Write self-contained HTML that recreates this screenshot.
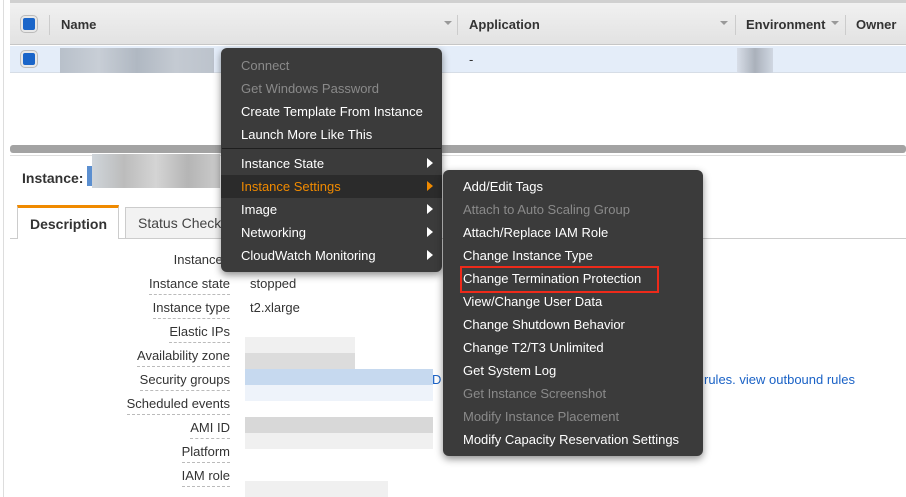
<!DOCTYPE html>
<html><head><style>
*{margin:0;padding:0;box-sizing:border-box}
body{width:906px;height:497px;overflow:hidden;background:#fff;font-family:"Liberation Sans",Arial,sans-serif;font-size:13px;color:#333;position:relative}
.a{position:absolute}
.cb{position:absolute;width:16px;height:16px;border-radius:4px;background:#1a65c9;border:2px solid #e8e8e8;box-shadow:0 0 0 1px #bbb}
.hdr{font-weight:bold;font-size:13px;color:#333}
.menu{position:absolute;background:#3b3b3b;border-radius:6px;box-shadow:0 3px 8px rgba(0,0,0,.45);color:#fff}
.mi{position:absolute;left:20px;font-size:13px;white-space:nowrap}
.dis{color:#8a8a8a}
.arr{position:absolute;left:206px;width:0;height:0;border-top:5px solid transparent;border-bottom:5px solid transparent;border-left:6px solid #fff}
.lab{position:absolute;right:676px;text-align:right;white-space:nowrap;color:#333;border-bottom:1px dashed #bbb;padding-bottom:3px}
.val{position:absolute;left:250px}
.blur{position:absolute}
</style></head><body>
<div class="a" style="left:3px;top:0;width:1px;height:497px;background:#ddd"></div>
<div class="a" style="left:10px;top:0;width:896px;height:3px;background:#d0d0d0"></div>
<div class="a" style="left:10px;top:3px;width:896px;height:42px;background:linear-gradient(#f1f1f1,#e2e2e2);border-bottom:1px solid #c6c6c6"></div>
<div class="cb" style="left:21px;top:16px"></div>
<div class="a" style="left:49px;top:15px;width:1px;height:20px;background:#ccc"></div>
<div class="a hdr" style="left:61px;top:17px">Name</div>
<div class="a" style="left:444px;top:21px;border-left:4px solid transparent;border-right:4px solid transparent;border-top:4px solid #999"></div>
<div class="a" style="left:457px;top:15px;width:1px;height:20px;background:#ccc"></div>
<div class="a hdr" style="left:469px;top:17px">Application</div>
<div class="a" style="left:720px;top:21px;border-left:4px solid transparent;border-right:4px solid transparent;border-top:4px solid #999"></div>
<div class="a" style="left:735px;top:15px;width:1px;height:20px;background:#ccc"></div>
<div class="a hdr" style="left:746px;top:17px">Environment</div>
<div class="a" style="left:831px;top:21px;border-left:4px solid transparent;border-right:4px solid transparent;border-top:4px solid #999"></div>
<div class="a" style="left:845px;top:15px;width:1px;height:20px;background:#ccc"></div>
<div class="a hdr" style="left:856px;top:17px">Owner</div>
<div class="a" style="left:10px;top:46px;width:896px;height:27px;background:#e4edf9;border-bottom:1px solid #d6dde6"></div>
<div class="cb" style="left:21px;top:51px"></div>
<div class="blur" style="left:60px;top:48px;width:154px;height:25px;background:linear-gradient(90deg,#b8c0ca,#c8ced6,#b0b8c2,#c4cad2,#bcc3cc)"></div>
<div class="a" style="left:469px;top:52px">-</div>
<div class="blur" style="left:737px;top:48px;width:36px;height:25px;background:linear-gradient(90deg,#d8dee8,#aab1bb,#d0d7e2)"></div>
<div class="a" style="left:10px;top:145px;width:896px;height:8px;background:#a3a3a3;border-radius:3px"></div>
<div class="a" style="left:10px;top:155px;width:896px;height:1px;background:#ddd"></div>
<div class="a" style="left:22px;top:170px;font-weight:bold;font-size:14px">Instance:</div>
<div class="blur" style="left:87px;top:166px;width:5px;height:20px;background:#5b8fd0"></div>
<div class="blur" style="left:92px;top:154px;width:128px;height:34px;background:linear-gradient(90deg,#cfd5da,#bcbcbc,#d4d4d4,#b5b5b5,#cccccc)"></div>
<div class="a" style="left:10px;top:238px;width:896px;height:1px;background:#ccc"></div>
<div class="a" style="left:17px;top:205px;width:102px;height:34px;background:#fff;border:1px solid #ccc;border-top:3px solid #f08a00;border-bottom:none;font-weight:bold;font-size:14px;padding:8px 0 0 12px">Description</div>
<div class="a" style="left:125px;top:207px;width:100px;height:31px;background:#f2f2f2;border:1px solid #ccc;border-bottom:none;font-size:14px;padding:7px 0 0 12px;color:#444">Status Check</div>
<div class="lab" style="top:252px;border:none">Instance I</div>
<div class="lab" style="top:276px">Instance state</div>
<div class="lab" style="top:300px">Instance type</div>
<div class="lab" style="top:324px">Elastic IPs</div>
<div class="lab" style="top:348px">Availability zone</div>
<div class="lab" style="top:372px">Security groups</div>
<div class="lab" style="top:396px">Scheduled events</div>
<div class="lab" style="top:420px">AMI ID</div>
<div class="lab" style="top:444px">Platform</div>
<div class="lab" style="top:468px">IAM role</div>
<div class="val" style="top:276px">stopped</div>
<div class="val" style="top:300px">t2.xlarge</div>
<div class="blur" style="left:245px;top:337px;width:110px;height:16px;background:#f0f0f0"></div>
<div class="blur" style="left:245px;top:353px;width:110px;height:16px;background:#dcdcdc"></div>
<div class="blur" style="left:245px;top:369px;width:188px;height:16px;background:#c6d9ef"></div>
<div class="blur" style="left:245px;top:385px;width:188px;height:16px;background:#eef3fa"></div>
<div class="a" style="left:432px;top:372px;color:#1a62c6">D</div>
<div class="blur" style="left:245px;top:417px;width:188px;height:16px;background:#d8d8d8"></div>
<div class="blur" style="left:245px;top:433px;width:188px;height:16px;background:#f0f0f0"></div>
<div class="blur" style="left:245px;top:481px;width:143px;height:16px;background:#f0f0f0"></div>
<div class="a" style="left:704px;top:372px;color:#1a62c6">rules. view outbound rules</div>

<div class="menu" style="left:221px;top:48px;width:221px;height:224px">
 <div class="mi dis" style="top:10px">Connect</div>
 <div class="mi dis" style="top:33px">Get Windows Password</div>
 <div class="mi" style="top:56px">Create Template From Instance</div>
 <div class="mi" style="top:79px">Launch More Like This</div>
 <div class="a" style="left:1px;top:100px;width:219px;height:1px;background:#1e1e1e"></div>
 <div class="mi" style="top:108px">Instance State</div><div class="arr" style="top:110px"></div>
 <div class="a" style="left:0;top:127px;width:221px;height:23px;background:#2b2b2b"></div>
 <div class="mi" style="top:131px;color:#f08a00">Instance Settings</div><div class="arr" style="top:133px;border-left-color:#f08a00"></div>
 <div class="mi" style="top:154px">Image</div><div class="arr" style="top:156px"></div>
 <div class="mi" style="top:177px">Networking</div><div class="arr" style="top:179px"></div>
 <div class="mi" style="top:200px">CloudWatch Monitoring</div><div class="arr" style="top:202px"></div>
</div>
<div class="menu" style="left:443px;top:170px;width:260px;height:286px">
 <div class="mi" style="top:9px">Add/Edit Tags</div>
 <div class="mi dis" style="top:32px">Attach to Auto Scaling Group</div>
 <div class="mi" style="top:55px">Attach/Replace IAM Role</div>
 <div class="mi" style="top:78px">Change Instance Type</div>
 <div class="mi" style="top:101px">Change Termination Protection</div>
 <div class="mi" style="top:124px">View/Change User Data</div>
 <div class="mi" style="top:147px">Change Shutdown Behavior</div>
 <div class="mi" style="top:170px">Change T2/T3 Unlimited</div>
 <div class="mi" style="top:193px">Get System Log</div>
 <div class="mi dis" style="top:216px">Get Instance Screenshot</div>
 <div class="mi dis" style="top:239px">Modify Instance Placement</div>
 <div class="mi" style="top:262px">Modify Capacity Reservation Settings</div>
</div>
<div class="a" style="left:460px;top:266px;width:199px;height:27px;border:2px solid #ee2a1a"></div>
</body></html>
